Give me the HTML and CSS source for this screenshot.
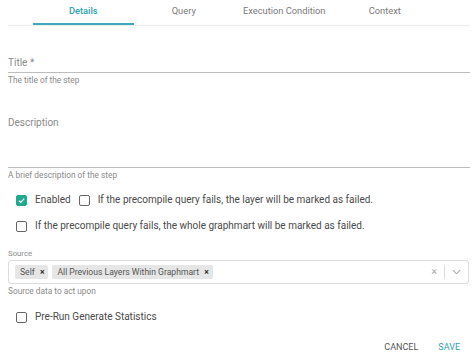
FILE: index.html
```html
<!DOCTYPE html>
<html>
<head>
<meta charset="utf-8">
<link rel="stylesheet" href="styles.css">
</head>
<body>
<div class="page">
  <div class="tabs">
    <div class="tab active">Details</div>
    <div class="tab">Query</div>
    <div class="tab">Execution Condition</div>
    <div class="tab">Context</div>
  </div>

  <div class="field field-title">
    <div class="label">Title *</div>
  </div>
  <div class="hint hint-title">The title of the step</div>

  <div class="field field-desc">
    <div class="label">Description</div>
  </div>
  <div class="hint hint-desc">A brief description of the step</div>

  <div class="check-row row1">
    <span class="box checked"><svg viewBox="0 0 12 12" width="11" height="11"><path d="M2.5 6.2 L5 8.6 L9.6 3.6" fill="none" stroke="#fff" stroke-width="1.6"/></svg></span>
    <span class="check-text">Enabled</span>
    <span class="box"></span>
    <span class="check-text">If the precompile query fails, the layer will be marked as failed.</span>
  </div>
  <div class="check-row row2">
    <span class="box"></span>
    <span class="check-text">If the precompile query fails, the whole graphmart will be marked as failed.</span>
  </div>

  <div class="small-label">Source</div>
  <div class="select">
    <div class="chips">
      <span class="chip">Self <span class="chip-x">×</span></span>
      <span class="chip">All Previous Layers Within Graphmart <span class="chip-x">×</span></span>
    </div>
    <div class="select-tools">
      <span class="clear">×</span>
      <span class="divider"></span>
      <svg class="chev" viewBox="0 0 10 6" width="9" height="6"><path d="M1 1 L5 5 L9 1" fill="none" stroke="#aaa" stroke-width="1.2"/></svg>
    </div>
  </div>
  <div class="hint hint-source">Source data to act upon</div>

  <div class="check-row row3">
    <span class="box"></span>
    <span class="check-text">Pre-Run Generate Statistics</span>
  </div>

  <div class="actions">
    <span class="btn cancel">CANCEL</span>
    <span class="btn save">SAVE</span>
  </div>
</div>
</body>
</html>
```

FILE: styles.css
```css
html, body {
  margin: 0;
  padding: 0;
  background: #fff;
}
body {
  font-family: Roboto, "Liberation Sans", Arial, sans-serif;
  color: #444;
}
.page {
  width: 474px;
  height: 356px;
  box-sizing: border-box;
  padding: 0 4px 0 8px;
  overflow: hidden;
}
.tabs {
  display: flex;
  height: 25px;
  border-bottom: 1px solid #ececec;
  padding-left: 25px;
}
.tab {
  width: 100.5px;
  box-sizing: border-box;
  height: 25px;
  padding-top: 5px;
  font-size: 9.3px;
  line-height: 12px;
  text-align: center;
  color: #7a7a7a;
  font-weight: 400;
}
.tab.active {
  color: #2f9fb3;
  font-weight: 500;
  border-bottom: 2px solid #3aa9bd;
}
.field {
  border-bottom: 1px solid #bdbdbd;
}
.label {
  font-size: 10px;
  line-height: 12px;
  color: #8a8a8a;
}
.field-title {
  margin-top: 31px;
  padding-bottom: 3px;
}
.hint {
  font-size: 8.3px;
  line-height: 10px;
  color: #8a8a8a;
}
.hint-title {
  margin-top: 2px;
}
.field-desc {
  margin-top: 32px;
  padding-bottom: 38px;
}
.hint-desc {
  margin-top: 2px;
}
.check-row {
  display: flex;
  align-items: center;
  height: 16px;
  padding-left: 8px;
}
.row1 { margin-top: 12px; }
.row2 { margin-top: 10px; }
.row3 { margin-top: 13px; }
.box {
  width: 11px;
  height: 11px;
  box-sizing: border-box;
  border: 1.4px solid #666;
  border-radius: 2px;
  margin-right: 8px;
  display: flex;
  align-items: center;
  justify-content: center;
  flex: none;
}
.box.checked {
  background: #20aa8e;
  border-color: #20aa8e;
}
.check-text {
  font-size: 10px;
  line-height: 12px;
  color: #4a4a4a;
  margin-right: 8px;
  white-space: nowrap;
}
.small-label {
  margin-top: 15px;
  font-size: 7.8px;
  line-height: 10px;
  color: #8a8a8a;
}
.select {
  margin-top: 1px;
  height: 24px;
  box-sizing: border-box;
  border: 1px solid #dcdcdc;
  border-radius: 3px;
  display: flex;
  align-items: center;
  justify-content: space-between;
  padding-left: 6px;
  margin-right: 1px;
}
.chips {
  display: flex;
  gap: 4px;
}
.chip {
  background: #e6e6e6;
  height: 14px;
  line-height: 14px;
  font-size: 8.6px;
  color: #555;
  padding: 0 4px 0 5px;
  border-radius: 2px;
  white-space: nowrap;
}
.chip-x {
  font-weight: 700;
  margin-left: 3px;
  color: #333;
}
.select-tools {
  display: flex;
  align-items: center;
  padding-right: 7px;
}
.clear {
  font-size: 11px;
  color: #aaa;
  line-height: 12px;
}
.divider {
  width: 1px;
  height: 14px;
  background: #dcdcdc;
  margin: 0 7px 0 7px;
}
.chev {
  display: block;
}
.hint-source {
  margin-top: 2px;
}
.actions {
  margin-top: 16px;
  display: flex;
  justify-content: flex-end;
  padding-right: 10px;
  gap: 20px;
}
.btn {
  font-size: 9px;
  line-height: 12px;
  color: #555;
}
.btn.save {
  color: #2f9fb3;
}
```
